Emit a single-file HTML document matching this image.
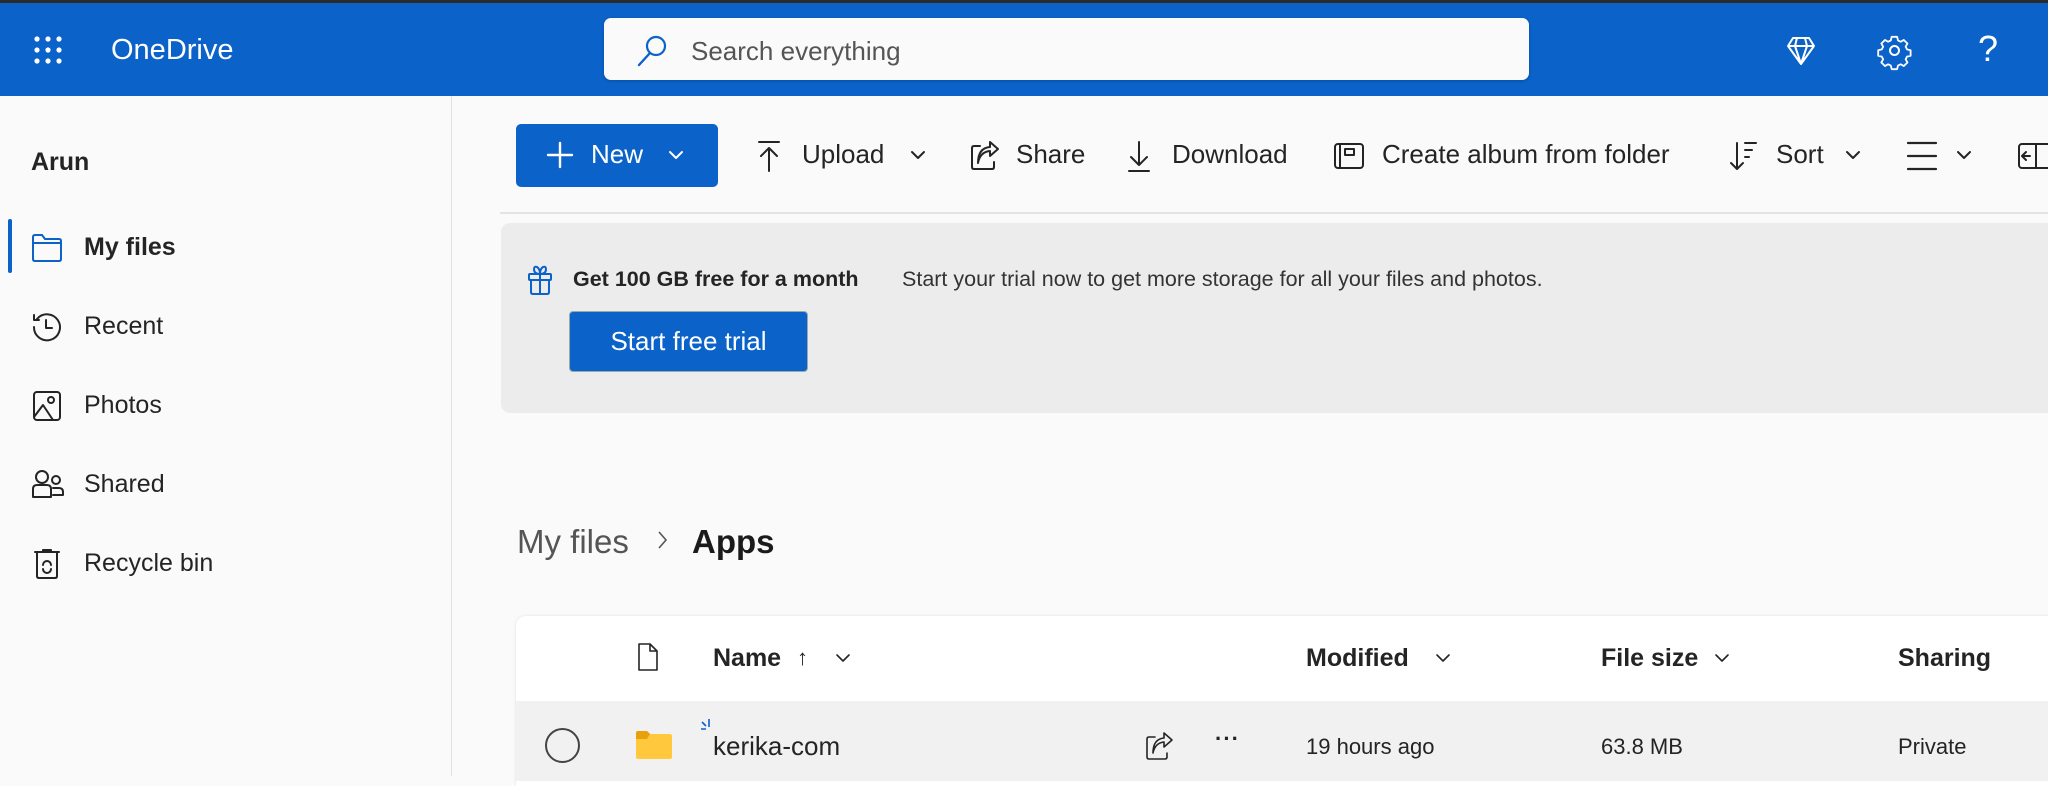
<!DOCTYPE html>
<html><head><meta charset="utf-8"><style>
*{margin:0;padding:0;box-sizing:border-box}
body{width:2048px;height:776px;overflow:hidden;background:#fafafa;font-family:"Liberation Sans",sans-serif;color:#242424;position:relative}
.a{position:absolute;white-space:nowrap}
svg{position:absolute;overflow:visible}
.ic{fill:none;stroke:#242424;stroke-width:2;stroke-linecap:round;stroke-linejoin:round}
.wi{fill:none;stroke:#fff;stroke-width:2;stroke-linecap:round;stroke-linejoin:round}
.tb{font-size:26px;top:139px}
.nav{font-size:25px;left:84px}
.th{font-size:25px;font-weight:bold;top:644px}
.td{font-size:22px;top:734px}
</style></head><body>
<div class="a" style="left:0;top:0;width:2048px;height:3px;background:#2b2b2b"></div>
<div class="a" style="left:0;top:3px;width:2048px;height:93px;background:#0b62c9"></div>
<svg style="left:34px;top:36px" width="28" height="28">
<g fill="#fff"><circle cx="3" cy="3" r="2.6"/><circle cx="14" cy="3" r="2.6"/><circle cx="25" cy="3" r="2.6"/><circle cx="3" cy="14" r="2.6"/><circle cx="14" cy="14" r="2.6"/><circle cx="25" cy="14" r="2.6"/><circle cx="3" cy="25" r="2.6"/><circle cx="14" cy="25" r="2.6"/><circle cx="25" cy="25" r="2.6"/></g></svg>
<div class="a" style="left:111px;top:34px;font-size:29px;color:#fff">OneDrive</div>
<div class="a" style="left:604px;top:18px;width:925px;height:62px;background:#fafafa;border-radius:7px;box-shadow:0 1px 3px rgba(0,0,0,.2)"></div>
<svg style="left:636px;top:35px" width="32" height="32"><circle cx="20" cy="11" r="9" fill="none" stroke="#0b62c9" stroke-width="2.2"/><path d="M14 18 L3 30" stroke="#0b62c9" stroke-width="2.4" stroke-linecap="round"/></svg>
<div class="a" style="left:691px;top:36px;font-size:26px;color:#555">Search everything</div>
<svg style="left:1786px;top:36px" width="30" height="30"><path class="wi" d="M7 2 H23 L28 10 L15 28 L2 10 Z M2 10 H28 M11 2 L9 10 L15 28 L21 10 L19 2"/></svg>
<svg style="left:1880px;top:35px" width="32" height="32"><path class="wi" d="M13 2 h6 l1 4 l3 1.5 l3.5-2 l4 4 l-2 3.5 l1.5 3 l4 1 v6 l-4 1 l-1.5 3 l2 3.5 l-4 4 l-3.5-2 l-3 1.5 l-1 4 h-6 l-1-4 l-3-1.5 l-3.5 2 l-4-4 l2-3.5 l-1.5-3 l-4-1 v-6 l4-1 l1.5-3 l-2-3.5 l4-4 l3.5 2 l3-1.5 z" transform="scale(.9)"/><circle cx="14.5" cy="15.5" r="4.5" fill="none" stroke="#fff" stroke-width="2"/></svg>
<div class="a" style="left:1978px;top:28px;font-size:36px;color:#fff">?</div>
<div class="a" style="left:451px;top:96px;width:1px;height:680px;background:#e1e1e1"></div>
<div class="a" style="left:31px;top:148px;font-size:25px;font-weight:bold">Arun</div>
<div class="a" style="left:8px;top:219px;width:4px;height:54px;background:#0b62c9;border-radius:2px"></div>
<svg style="left:31px;top:233px" width="32" height="30"><path d="M2 4 Q2 2 4 2 H11 L14 6 H28 Q30 6 30 8 V26 Q30 28 28 28 H4 Q2 28 2 26 Z M2 10 H30" fill="none" stroke="#0b62c9" stroke-width="2"/></svg>
<div class="a nav" style="top:233px;font-weight:bold">My files</div>
<svg style="left:31px;top:311px" width="32" height="32"><path class="ic" d="M6 8 A13 13 0 1 1 3 16 M3 4 V9 H8 M15 9 V17 H21"/></svg>
<div class="a nav" style="top:312px">Recent</div>
<svg style="left:33px;top:391px" width="28" height="30"><rect x="1" y="1" width="26" height="28" rx="3" class="ic"/><circle cx="18" cy="9" r="3" class="ic"/><path class="ic" d="M1 26 L10 14 L20 29"/></svg>
<div class="a nav" style="top:391px">Photos</div>
<svg style="left:31px;top:469px" width="34" height="32"><circle cx="11" cy="8" r="6" class="ic"/><circle cx="25" cy="11" r="4" class="ic"/><path class="ic" d="M2 28 V20 Q2 16 6 16 H16 Q20 16 20 20 V28 Z M22 19 H28 Q32 19 32 23 V26 H22"/></svg>
<div class="a nav" style="top:470px">Shared</div>
<svg style="left:33px;top:548px" width="28" height="32"><path class="ic" d="M2 4 H26 M4 4 V28 Q4 30 6 30 H22 Q24 30 24 28 V4 M10 4 V2 H18 V4 M10 17 A4 4 0 0 1 18 17 M10 21 A4 4 0 0 0 18 21"/></svg>
<div class="a nav" style="top:549px">Recycle bin</div>
<div class="a" style="left:516px;top:124px;width:202px;height:63px;background:#0b62c9;border-radius:5px"></div>
<svg style="left:547px;top:142px" width="26" height="26"><path class="wi" d="M13 1 V25 M1 13 H25" style="stroke-width:2.4"/></svg>
<div class="a tb" style="left:591px;color:#fff">New</div>
<svg style="left:668px;top:150px" width="16" height="10"><path class="wi" d="M2 2 L8 8 L14 2"/></svg>
<svg style="left:757px;top:140px" width="24" height="32"><path class="ic" d="M2 2 H22 M12 8 V31 M4 16 L12 8 L20 16"/></svg>
<div class="a tb" style="left:802px">Upload</div>
<svg style="left:910px;top:150px" width="16" height="10"><path class="ic" d="M2 2 L8 8 L14 2"/></svg>
<svg style="left:970px;top:141px" width="30" height="30"><path class="ic" d="M10 5 H4 Q2 5 2 7 V26 Q2 28 4 28 H22 Q24 28 24 26 V21 M8 22 Q10 11 20 10 V15 L28 8 L20 1 V6 Q8 7 8 22"/></svg>
<div class="a tb" style="left:1016px">Share</div>
<svg style="left:1127px;top:140px" width="24" height="32"><path class="ic" d="M12 2 V25 M4 17 L12 25 L20 17 M2 31 H22"/></svg>
<div class="a tb" style="left:1172px">Download</div>
<svg style="left:1334px;top:143px" width="30" height="26"><rect x="1" y="1" width="28" height="24" rx="3" class="ic"/><path class="ic" d="M6 1 V25"/><rect x="11" y="6" width="9" height="6" class="ic"/></svg>
<div class="a tb" style="left:1382px">Create album from folder</div>
<svg style="left:1730px;top:141px" width="30" height="30"><path class="ic" d="M7 2 V28 M1 22 L7 28 L13 22 M15 2 H26 M15 9 H22 M15 16 H19"/></svg>
<div class="a tb" style="left:1776px">Sort</div>
<svg style="left:1845px;top:150px" width="16" height="10"><path class="ic" d="M2 2 L8 8 L14 2"/></svg>
<svg style="left:1906px;top:141px" width="32" height="30"><path class="ic" d="M2 2 H30 M2 15 H30 M2 28 H30" style="stroke-width:2.2"/></svg>
<svg style="left:1956px;top:150px" width="16" height="10"><path class="ic" d="M2 2 L8 8 L14 2"/></svg>
<svg style="left:2018px;top:143px" width="30" height="26"><rect x="1" y="1" width="40" height="24" rx="3" class="ic"/><path class="ic" d="M18 1 V25 M12 13 H5 M8 9 L4 13 L8 17"/></svg>
<div class="a" style="left:500px;top:212px;width:1548px;height:2px;background:#e4e4e4"></div>
<div class="a" style="left:501px;top:223px;width:1560px;height:190px;background:#ececec;border-radius:9px"></div>
<svg style="left:528px;top:265px" width="24" height="30"><rect x="1" y="9" width="22" height="6" rx="1" fill="none" stroke="#0b62c9" stroke-width="2"/><path d="M3 15 V27 Q3 29 5 29 H19 Q21 29 21 27 V15 M12 9 V29 M12 9 Q6 9 6 4 Q6 1 9 2 Q12 4 12 9 Q12 4 15 2 Q18 1 18 4 Q18 9 12 9" fill="none" stroke="#0b62c9" stroke-width="2"/></svg>
<div class="a" style="left:573px;top:267px;font-size:21.5px;font-weight:bold">Get 100 GB free for a month</div>
<div class="a" style="left:902px;top:267px;font-size:21.5px;color:#333">Start your trial now to get more storage for all your files and photos.</div>
<div class="a" style="left:569px;top:311px;width:239px;height:61px;background:#0b62c9;border-radius:4px;border:1px solid #9aa"></div>
<div class="a" style="left:569px;top:326px;width:239px;text-align:center;font-size:26px;color:#fff">Start free trial</div>
<div class="a" style="left:517px;top:523px;font-size:33px;color:#555">My files</div>
<svg style="left:657px;top:530px" width="12" height="20"><path d="M2 2 L9 10 L2 18" fill="none" stroke="#555" stroke-width="1.6"/></svg>
<div class="a" style="left:692px;top:523px;font-size:33px;font-weight:bold;color:#1b1b1b">Apps</div>
<div class="a" style="left:516px;top:616px;width:1540px;height:170px;background:#fff;border-radius:10px 0 0 0;box-shadow:0 0 3px rgba(0,0,0,.1)"></div>
<svg style="left:637px;top:642px" width="22" height="30"><path class="ic" d="M2 2 H13 L20 9 V28 H2 Z M13 2 V9 H20" style="stroke-width:1.6"/></svg>
<div class="a th" style="left:713px">Name</div>
<div class="a" style="left:797px;top:645px;font-size:22px">↑</div>
<svg style="left:835px;top:653px" width="16" height="10"><path class="ic" d="M2 2 L8 8 L14 2" style="stroke-width:1.6"/></svg>
<div class="a th" style="left:1306px">Modified</div>
<svg style="left:1435px;top:653px" width="16" height="10"><path class="ic" d="M2 2 L8 8 L14 2" style="stroke-width:1.6"/></svg>
<div class="a th" style="left:1601px">File size</div>
<svg style="left:1714px;top:653px" width="16" height="10"><path class="ic" d="M2 2 L8 8 L14 2" style="stroke-width:1.6"/></svg>
<div class="a th" style="left:1898px">Sharing</div>
<div class="a" style="left:516px;top:701px;width:1540px;height:80px;background:#f1f1f1"></div>
<div class="a" style="left:545px;top:728px;width:35px;height:35px;border:2px solid #444;border-radius:50%"></div>
<svg style="left:635px;top:730px" width="38" height="30"><path d="M1 3 Q1 1 3 1 H12 L15 4 H35 Q37 4 37 6 V27 Q37 29 35 29 H3 Q1 29 1 27 Z" fill="#ffc83d"/><path d="M1 3 Q1 1 3 1 H12 L15 4 L12 9 H1 Z" fill="#e8a10d"/></svg>
<svg style="left:700px;top:718px" width="14" height="14"><path d="M9 1 V9 M1 11 H6 M2 4 L6 8" stroke="#0b62c9" stroke-width="1.6"/></svg>
<div class="a" style="left:713px;top:731px;font-size:26px">kerika-com</div>
<svg style="left:1145px;top:733px" width="30" height="28"><path class="ic" d="M10 4 H4 Q2 4 2 6 V24 Q2 26 4 26 H20 Q22 26 22 24 V20 M8 20 Q10 10 19 9 V14 L27 7 L19 0 V5 Q8 6 8 20" style="stroke-width:1.6"/></svg>
<div class="a" style="left:1215px;top:726px;font-size:22px;font-weight:bold;letter-spacing:1px">···</div>
<div class="a td" style="left:1306px">19 hours ago</div>
<div class="a td" style="left:1601px">63.8 MB</div>
<div class="a td" style="left:1898px">Private</div>
</body></html>
